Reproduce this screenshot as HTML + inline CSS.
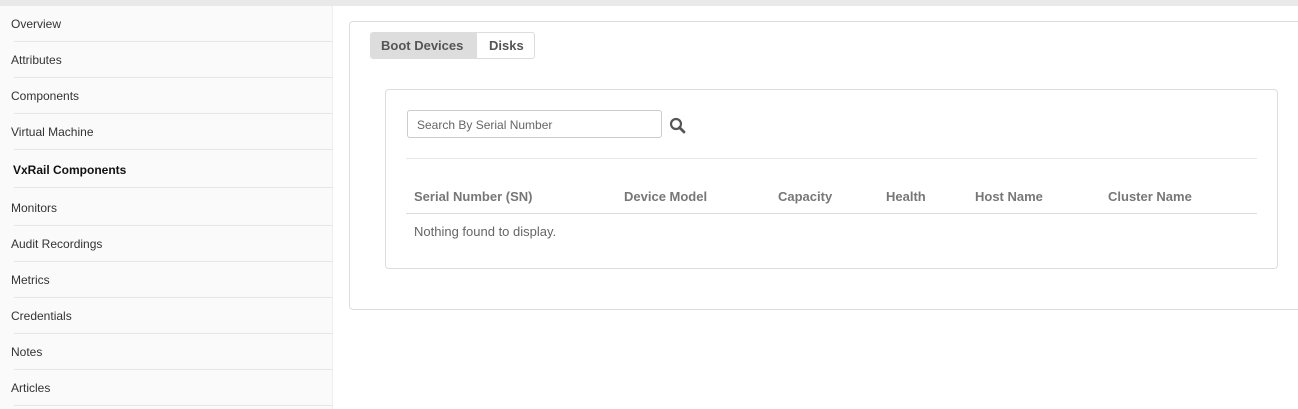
<!DOCTYPE html>
<html><head><meta charset="utf-8"><style>
*{box-sizing:border-box;margin:0;padding:0}
body{width:1298px;height:409px;overflow:hidden;background:#fff;font-family:"Liberation Sans",sans-serif;position:relative}
.top{position:absolute;left:0;top:0;width:1298px;height:6px;background:#e9e9e9}
.side{position:absolute;left:0;top:6px;width:333px;height:403px;background:#fafafa;border-right:1px solid #eee}
.item{position:absolute;left:11px;font-size:12px;color:#333;margin-top:1px}
.sep{position:absolute;left:14px;width:319px;height:1px;background:#e6e6e6}
.panel{position:absolute;left:349px;top:21px;width:960px;height:289px;border:1px solid #ddd;border-radius:4px}
.tabs{position:absolute;left:370px;top:32px;width:165px;height:27px;border:1px solid #ddd;border-radius:3px;overflow:hidden;font-size:13px;font-weight:bold;color:#555}
.t1{position:absolute;left:0;top:0;width:106px;height:27px;background:#ddd;padding:5px 0 0 10px}
.t2{position:absolute;left:118px;top:5px}
.inner{position:absolute;left:385px;top:89px;width:893px;height:180px;border:1px solid #ddd;border-radius:4px}
.search{position:absolute;left:407px;top:110px;width:255px;height:28px;border:1px solid #ccc;border-radius:3px;font-size:12px;color:#666;padding:7px 0 0 9px}
.hr{position:absolute;left:406px;top:158px;width:851px;height:1px;background:#e8e8e8}
.th{position:absolute;top:189px;font-size:13px;font-weight:bold;color:#777}
.hl{position:absolute;left:406px;top:213px;width:851px;height:1px;background:#ddd}
.none{position:absolute;left:414px;top:224px;font-size:13px;color:#666}
</style></head><body>
<div class="top"></div>
<div class="side"></div>
<div class="item" style="top:16px">Overview</div><div class="sep" style="top:41px"></div>
<div class="item" style="top:52px">Attributes</div><div class="sep" style="top:77px"></div>
<div class="item" style="top:88px">Components</div><div class="sep" style="top:113px"></div>
<div class="item" style="top:124px">Virtual Machine</div><div class="sep" style="top:149px"></div>
<div class="item" style="top:162px;left:13px;font-weight:bold;color:#111">VxRail Components</div><div class="sep" style="top:187px"></div>
<div class="item" style="top:200px">Monitors</div><div class="sep" style="top:225px"></div>
<div class="item" style="top:236px">Audit Recordings</div><div class="sep" style="top:261px"></div>
<div class="item" style="top:272px">Metrics</div><div class="sep" style="top:297px"></div>
<div class="item" style="top:308px">Credentials</div><div class="sep" style="top:333px"></div>
<div class="item" style="top:344px">Notes</div><div class="sep" style="top:369px"></div>
<div class="item" style="top:380px">Articles</div><div class="sep" style="top:405px"></div>
<div class="panel"></div>
<div class="tabs"><div class="t1">Boot Devices</div><div class="t2">Disks</div></div>
<div class="inner"></div>
<div class="search">Search By Serial Number</div>
<svg style="position:absolute;left:669px;top:117px" width="17" height="17" viewBox="0 0 17 17"><circle cx="7" cy="7" r="5" fill="none" stroke="#555" stroke-width="2.2"/><line x1="10.5" y1="10.5" x2="15" y2="15" stroke="#555" stroke-width="2.8" stroke-linecap="round"/></svg>
<div class="hr"></div>
<div class="th" style="left:414px">Serial Number (SN)</div>
<div class="th" style="left:624px">Device Model</div>
<div class="th" style="left:778px">Capacity</div>
<div class="th" style="left:886px">Health</div>
<div class="th" style="left:975px">Host Name</div>
<div class="th" style="left:1108px">Cluster Name</div>
<div class="hl"></div>
<div class="none">Nothing found to display.</div>
</body></html>
